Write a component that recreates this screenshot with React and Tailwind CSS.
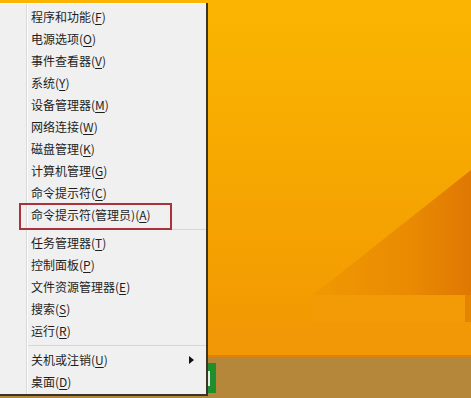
import React from "react";

const groups = [
  [
    ["程序和功能", "F"],
    ["电源选项", "O"],
    ["事件查看器", "V"],
    ["系统", "Y"],
    ["设备管理器", "M"],
    ["网络连接", "W"],
    ["磁盘管理", "K"],
    ["计算机管理", "G"],
    ["命令提示符", "C"],
    ["命令提示符(管理员)", "A"],
  ],
  [
    ["任务管理器", "T"],
    ["控制面板", "P"],
    ["文件资源管理器", "E"],
    ["搜索", "S"],
    ["运行", "R"],
  ],
  [
    ["关机或注销", "U", true],
    ["桌面", "D"],
  ],
];

// desktop wallpaper drawing (orange Windows 8 background)
const Wallpaper = () => (
  <svg className="block" width="471" height="357" viewBox="0 0 471 357">
    <defs>
      <linearGradient id="wall" x1="0" y1="0" x2="0" y2="1">
        <stop offset="0" stopColor="#fbb501" />
        <stop offset="0.3" stopColor="#f8ad00" />
        <stop offset="0.8" stopColor="#f39d02" />
        <stop offset="1" stopColor="#f19600" />
      </linearGradient>
      <linearGradient id="tri" x1="0" y1="0" x2="1" y2="0">
        <stop offset="0" stopColor="#f09803" />
        <stop offset="0.6" stopColor="#ea8b02" />
        <stop offset="1" stopColor="#df7803" />
      </linearGradient>
    </defs>
    <rect width="471" height="357" fill="url(#wall)" />
    <polygon points="313,295 471,170 471,295" fill="url(#tri)" />
    <rect x="313" y="295" width="152" height="26" fill="#f29b06" />
    <rect x="465" y="295" width="6" height="28" fill="#e48400" />
    <rect x="0" y="322" width="471" height="33" fill="#f29806" />
    <rect x="0" y="355" width="471" height="2" fill="#dd8204" />
  </svg>
);

const Row = ({ label, keyChar, arrow }) => (
  <div className="h-[22px] flex items-center pl-[31px] pr-[12px] text-[12px] text-[#1e1e1e] leading-none">
    <span>
      {label}(<span className="underline underline-offset-2">{keyChar}</span>)
    </span>
    {arrow && (
      <svg className="ml-auto" width="5" height="8" viewBox="0 0 5 8">
        <polygon points="0,0 5,4 0,8" fill="#111" />
      </svg>
    )}
  </div>
);

const Menu = () => (
  <div className="absolute left-0 top-[3px] w-[208px] h-[393px] border-r-2 border-b-2 border-[#3b3526]">
    <div className="relative h-full bg-[#f0f0f0] border-t border-[#fafafa] pt-[2px]">
      <div className="absolute left-[26px] top-0 bottom-0 w-[2px] border-l border-[#dadada] bg-[#fcfcfc]" />
      {groups.map((g, gi) => (
        <div key={gi} className="relative">
          {gi > 0 && (
            <div className={`flex items-center pl-[28px] ${gi === 1 ? "h-[6px]" : "h-[7px]"}`}>
              <div className="h-px w-full bg-[#d6d6d6]" />
            </div>
          )}
          {g.map(([label, k, arrow]) => (
            <Row key={label} label={label} keyChar={k} arrow={arrow} />
          ))}
        </div>
      ))}
    </div>
  </div>
);

export default function App() {
  return (
    <div
      className="relative w-[471px] h-[398px] overflow-hidden flex flex-col"
      style={{ fontFamily: '"Noto Sans CJK SC", "Liberation Sans", sans-serif' }}
    >
      <Wallpaper />
      <div className="flex-1 bg-[#b5873a] flex items-start pt-[6px] pl-[206px]">
        <div className="w-[10px] h-[30px] bg-[#1e8f2c] flex items-center">
          <div className="w-[4px] h-[15px] bg-[#e8ece8]" />
        </div>
      </div>
      <Menu />
      {/* red annotation box */}
      <div className="absolute left-[19px] top-[203px] w-[153px] h-[27px] border-2 border-[#a8333d]" />
    </div>
  );
}
